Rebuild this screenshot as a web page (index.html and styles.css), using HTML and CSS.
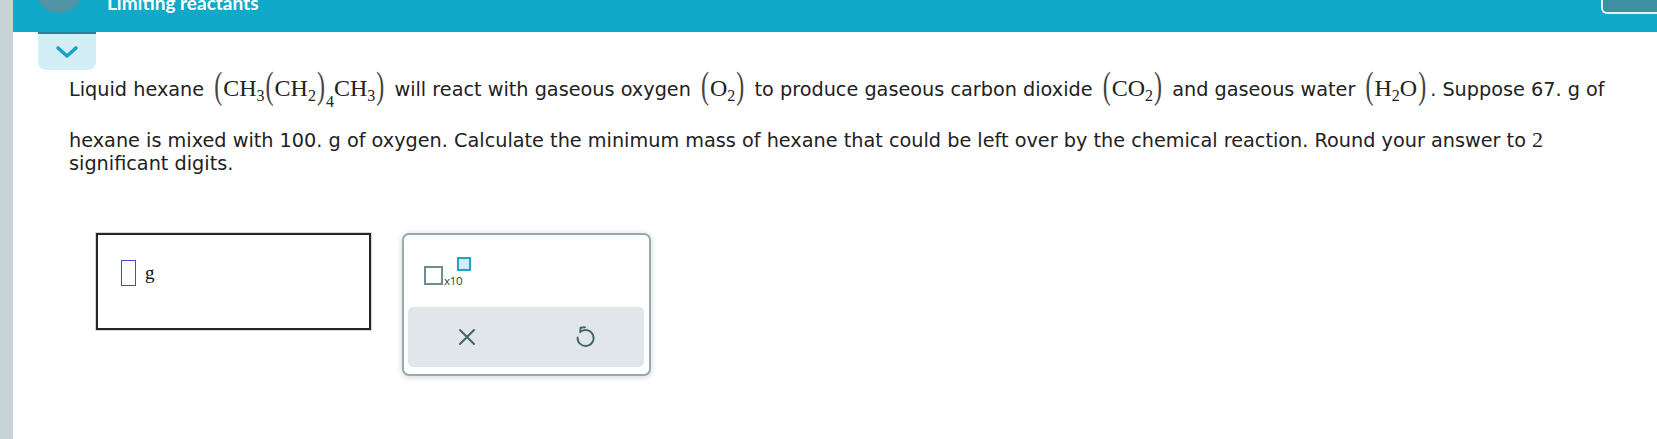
FILE: index.html
```html
<!DOCTYPE html>
<html lang="en">
<head>
<meta charset="utf-8">
<title>Limiting reactants</title>
<link rel="stylesheet" href="styles.css">
</head>
<body>
<div class="app">
  <div class="rail"></div>
  <div class="main">
    <header class="topbar">
      <div class="avatar"></div>
      <div class="title">Limiting reactants</div>
      <div class="status"></div>
    </header>
    <div class="content">
      <button class="toggle" type="button" aria-label="Collapse">
        <svg width="24" height="14" viewBox="0 0 24 14"><path d="M3 3 L12 11 L21 3" fill="none" stroke="#1aa1c3" stroke-width="3.6" stroke-linecap="round" stroke-linejoin="round"/></svg>
      </button>
      <p class="question">Liquid hexane <span class="m"><span class="p">(</span>CH<span class="sub">3</span><span class="p">(</span>CH<span class="sub">2</span><span class="p">)</span><span class="sub low">4</span>CH<span class="sub">3</span><span class="p">)</span></span> will react with gaseous oxygen <span class="m"><span class="p">(</span>O<span class="sub">2</span><span class="p">)</span></span> to produce gaseous carbon dioxide <span class="m"><span class="p">(</span>CO<span class="sub">2</span><span class="p">)</span></span> and gaseous water <span class="m"><span class="p">(</span>H<span class="sub">2</span>O<span class="p">)</span></span>. Suppose 67. g of hexane is mixed with 100. g of oxygen. Calculate the minimum mass of hexane that could be left over by the chemical reaction. Round your answer to <span class="num">2</span> significant digits.</p>
      <div class="answer-row">
        <div class="answer-box">
          <span class="cursor"></span>
          <span class="unit">g</span>
        </div>
        <div class="keypad">
          <div class="keypad-top">
            <div class="sci">
              <span class="sci-base"></span>
              <span class="sci-x">x10</span>
              <span class="sci-exp"></span>
            </div>
          </div>
          <div class="keypad-actions">
            <button class="key" type="button" aria-label="Clear">
              <svg width="18" height="18" viewBox="0 0 18 18"><path d="M2 2 L16 16 M16 2 L2 16" fill="none" stroke="#46636d" stroke-width="2" stroke-linecap="round"/></svg>
            </button>
            <button class="key" type="button" aria-label="Undo">
              <svg width="22" height="26" viewBox="0 0 22 26"><path d="M7.2 7.3 A8 8 0 1 1 3.6 13.5" fill="none" stroke="#46636d" stroke-width="1.9" stroke-linecap="round"/><path d="M11 3.2 L6.6 3.6 L6.2 8.2" fill="none" stroke="#46636d" stroke-width="1.9" stroke-linecap="round" stroke-linejoin="round"/></svg>
            </button>
          </div>
        </div>
      </div>
    </div>
  </div>
</div>
</body>
</html>
```
FILE: styles.css
```css
html, body {
  margin: 0;
  padding: 0;
  background: #ffffff;
}
body {
  font-family: "DejaVu Sans", Verdana, sans-serif;
  color: #222222;
}
.app {
  display: flex;
  min-height: 100vh;
}
.rail {
  width: 13px;
  flex: none;
  background: #c8d3d8;
}
.main {
  flex: 1;
  min-width: 0;
}
.topbar {
  height: 32px;
  background: #10a9c9;
  display: flex;
  align-items: flex-start;
  padding-left: 22px;
  overflow: hidden;
}
.avatar {
  width: 48px;
  height: 48px;
  border-radius: 50%;
  background: #4f93a4;
  margin-top: -35px;
  flex: none;
}
.title {
  margin-left: 24px;
  margin-top: -7px;
  font-family: Lato, "Open Sans", sans-serif;
  font-weight: 700;
  font-size: 19px;
  line-height: 20px;
  color: #ffffff;
}
.status {
  margin-left: auto;
  width: 54px;
  height: 12px;
  margin-top: -2px;
  background: #3e8fa1;
  border: 2px solid #e4f2f5;
  border-right: none;
  border-radius: 0 0 0 6px;
}
.content {
  padding-left: 25px;
}
.toggle {
  display: flex;
  align-items: center;
  justify-content: center;
  width: 58px;
  height: 38px;
  padding: 0;
  margin: 0;
  border: none;
  border-top: 2px solid #2a8394;
  border-radius: 0 0 8px 8px;
  background: #d4eef5;
  box-sizing: border-box;
}
.question {
  margin: 6px 0 0 31px;
  width: 1545px;
  font-size: 19.25px;
  line-height: 23px;
}
.m {
  font-family: "Liberation Serif", "Times New Roman", serif;
  font-size: 24px;
  margin: 0 3px 0 3px;
}
.num {
  font-family: "Liberation Serif", "Times New Roman", serif;
  font-size: 22px;
}
.p {
  display: inline-block;
  padding: 0 0 28px;
  line-height: 24px;
  color: #444;
  transform: scaleY(1.55);
  transform-origin: 50% 16px;
  margin: 0 1px;
}
.sub {
  font-size: 16px;
  vertical-align: -5px;
  line-height: 0;
}
.sub.low {
  vertical-align: -11px;
}
.answer-row {
  display: flex;
  align-items: flex-start;
  margin-top: 58px;
  margin-left: 58px;
  gap: 31px;
}
.answer-box {
  width: 275px;
  height: 97px;
  box-sizing: border-box;
  border: 2px solid #262626;
  box-shadow: 0 0 0 1px #d6d6d6;
  display: flex;
  align-items: flex-start;
  padding: 25px 0 0 23px;
}
.cursor {
  width: 15px;
  height: 26px;
  box-sizing: border-box;
  border: 1.5px solid #4646e8;
}
.unit {
  margin-left: 9px;
  margin-top: 3px;
  font-family: "Liberation Serif", "Times New Roman", serif;
  font-size: 19px;
  line-height: 20px;
  color: #111;
}
.keypad {
  width: 249px;
  height: 143px;
  box-sizing: border-box;
  border: 2px solid #93abb3;
  border-radius: 7px;
  background: #ffffff;
  box-shadow: 0 1px 6px rgba(0, 0, 0, 0.18);
  padding: 0 5px 7px 4px;
  display: flex;
  flex-direction: column;
}
.keypad-top {
  height: 72px;
  padding: 20px 0 0 16px;
  box-sizing: border-box;
}
.sci {
  display: flex;
  align-items: flex-start;
  padding-top: 2px;
}
.sci-base {
  width: 19px;
  height: 19px;
  box-sizing: border-box;
  border: 2px solid #6f8b94;
  margin-top: 9px;
}
.sci-x {
  font-family: "Open Sans", sans-serif;
  font-size: 11.5px;
  line-height: 12px;
  color: #3a3a3a;
  margin-top: 18px;
  margin-left: 1px;
  letter-spacing: -0.3px;
}
.sci-exp {
  width: 14px;
  height: 14px;
  box-sizing: border-box;
  border: 2px solid #26a1c1;
  background: #cdeef6;
  margin-left: -5px;
  margin-top: 0;
}
.keypad-actions {
  flex: 1;
  display: flex;
  background: #e0e6e9;
  border-radius: 5px;
}
.key {
  flex: 1;
  display: flex;
  align-items: center;
  justify-content: center;
  border: none;
  background: transparent;
  padding: 0;
  margin: 0;
}
```
